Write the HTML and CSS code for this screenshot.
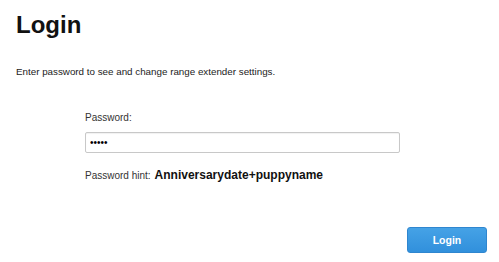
FILE: index.html
```html
<!DOCTYPE html>
<html>
<head>
<meta charset="utf-8">
<link rel="stylesheet" href="styles.css">
</head>
<body>
<div class="page">
  <h1 class="title">Login</h1>
  <p class="intro">Enter password to see and change range extender settings.</p>
  <div class="form">
    <label class="label" for="pw">Password:</label>
    <input class="input" id="pw" type="password" value="12345">
    <div class="hint">
      <span class="hint-label">Password hint:</span>
      <span class="hint-value">Anniversarydate+puppyname</span>
    </div>
  </div>
  <div class="actions">
    <button class="btn">Login</button>
  </div>
</div>
</body>
</html>
```
FILE: styles.css
```css
html, body {
  margin: 0;
  padding: 0;
  background: #ffffff;
}
.page {
  font-family: "Liberation Sans", Arial, sans-serif;
  color: #222;
  padding: 10px 12px 0 16px;
}
.title {
  margin: 0;
  font-size: 24px;
  font-weight: bold;
  color: #111;
  line-height: 30px;
}
.intro {
  margin: 26px 0 0 0;
  font-size: 9.8px;
  line-height: 12px;
  color: #222;
}
.form {
  margin: 34px 0 0 69px;
  display: flex;
  flex-direction: column;
  width: 315px;
}
.label {
  font-size: 10px;
  line-height: 12px;
  color: #333;
}
.input {
  margin-top: 8px;
  box-sizing: border-box;
  width: 315px;
  height: 21px;
  border: 1px solid #c8c8c8;
  border-radius: 2px;
  padding: 0 4px;
  font-size: 10px;
  outline: none;
  box-shadow: inset 0 1px 1px rgba(0,0,0,0.06);
}
.hint {
  margin-top: 15px;
  display: flex;
  align-items: baseline;
  gap: 4px;
}
.hint-label {
  font-size: 10px;
  color: #333;
}
.hint-value {
  font-size: 12px;
  font-weight: bold;
  color: #111;
}
.actions {
  display: flex;
  justify-content: flex-end;
  margin-top: 45px;
}
.btn {
  width: 80px;
  height: 26px;
  border: 1px solid #2f86cf;
  border-radius: 3px;
  background: linear-gradient(#45a2e6, #3190dc);
  color: #fff;
  font-family: "Liberation Sans", Arial, sans-serif;
  font-size: 10.5px;
  font-weight: bold;
  cursor: pointer;
}
```
